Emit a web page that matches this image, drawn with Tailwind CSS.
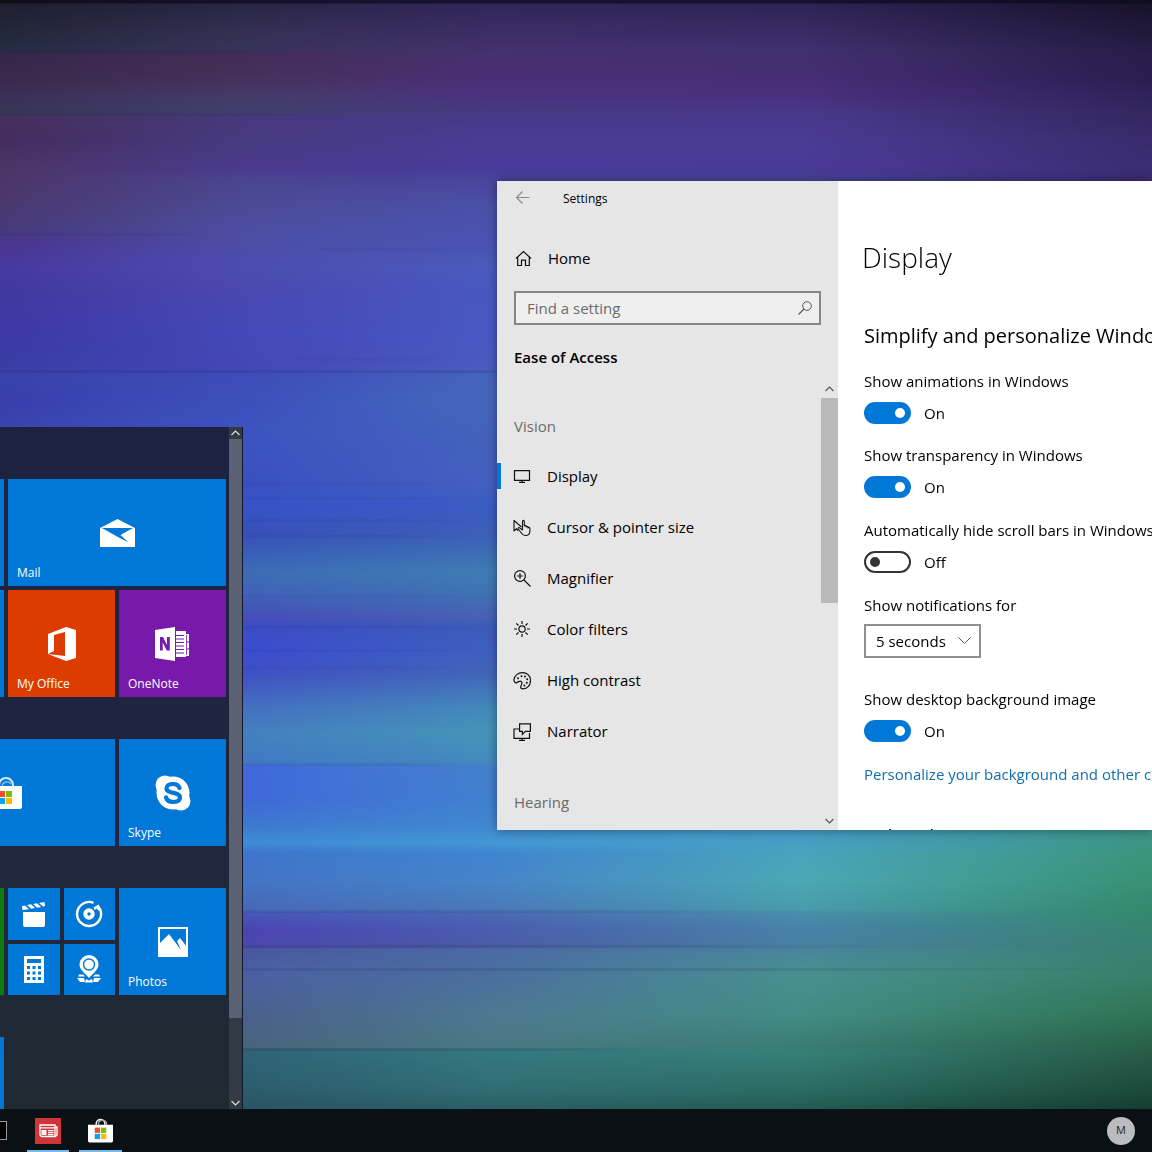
<!DOCTYPE html>
<html lang="en">
<head>
    <meta charset="UTF-8">
    <meta name="viewport" content="width=device-width, initial-scale=1.0">
    <title>Desktop</title>
    <script src="https://cdn.jsdelivr.net/npm/@tailwindcss/browser@4"></script>
</head>
<body class="font-['Open_Sans','Noto_Sans',sans-serif] text-[15px] text-black">
    <div class="relative flex h-screen flex-col overflow-hidden bg-[#3c48b4]">
        <canvas id="wallpaper" class="absolute inset-x-0 top-0 h-full w-full"></canvas>

        <main class="relative flex-1">
            <!-- Start menu -->
            <section aria-label="Start" class="absolute bottom-0 left-0 flex h-[682px] w-[243px] overflow-hidden border-r border-[#14182c] bg-linear-to-b from-[#1d2242] via-[#20263f] via-60% to-[#1f2a30]">
                <div class="flex flex-1 justify-end overflow-hidden pt-[52px] pr-[3px] text-[12px] text-white">
                    <div class="flex shrink-0 flex-col gap-[42px]">
                        <div class="grid grid-cols-[107px_107px_107px] auto-rows-[107px] gap-1">
                            <a href="#" aria-label="Calendar" class="bg-[#0078d7]"></a>
                            <a href="#" class="relative col-span-2 flex items-center justify-center bg-[#0078d7]">
                                <svg class="h-7 w-[35px]" viewBox="0 0 35 28"><path fill="#fff" d="M17.5 0 35 9v19H0V9z"/><path fill="#0078d7" d="M2 9h31L20.500 16l8 7.500L17 17.500z"/></svg>
                                <span class="absolute bottom-1 left-[9px]">Mail</span>
                            </a>
                            <a href="#" aria-label="Edge" class="bg-[#0078d7]"></a>
                            <a href="#" class="relative flex items-center justify-center bg-[#dc3c00]">
                                <svg class="h-[34px] w-[30px]" viewBox="0 0 30 34"><path fill="#fff" fill-rule="evenodd" d="M1 7 19 0l10 3v28l-10 3L1 27l17 2V5L7 8v16l-6 3z"/></svg>
                                <span class="absolute bottom-1 left-[9px]">My Office</span>
                            </a>
                            <a href="#" class="relative flex items-center justify-center bg-[#7719aa]">
                                <svg class="h-[34px] w-[35px]" viewBox="0 0 35 34"><path fill="#fff" d="M0 3 20 0v34L0 31zM21 4h10v3h3v22h-3v1H21z"/><path stroke="#7719aa" stroke-width="1.200" d="M21 8.500h8M21 12h8M21 15.500h8M21 19h8M21 22.500h8M21 26h8M31.500 15h3M31.500 22h3"/><path stroke="#7719aa" stroke-width=".8" d="M31.500 8v20"/><path fill="#7719aa" d="M5 10h3l4 8v-8h2.800v13.500h-3l-4.100-8v8H5z"/></svg>
                                <span class="absolute bottom-1 left-[9px]">OneNote</span>
                            </a>
                        </div>
                        <div class="grid grid-cols-[107px_107px_107px] auto-rows-[107px] gap-1">
                            <a href="#" aria-label="Store" class="col-span-2 flex items-center justify-center bg-[#0078d7]">
                                <svg class="h-[34px] w-8" viewBox="0 0 32 34"><path fill="none" stroke="#d6ebfb" stroke-width="2" d="M9 11V9a7 7 0 0 1 14 0v2"/><path fill="none" stroke="#7fbaeb" stroke-width="1.500" d="M12 10a5 5 0 0 1 9-2"/><path fill="#fff" d="M0 10h32v21a2 2 0 0 1-2 2H2a2 2 0 0 1-2-2z"/><path fill="#f25022" d="M9 15h6v6H9z"/><path fill="#7fba00" d="M16 15h6v6h-6z"/><path fill="#00a4ef" d="M9 22h6v6H9z"/><path fill="#ffb900" d="M16 22h6v6h-6z"/></svg>
                            </a>
                            <a href="#" class="relative flex items-center justify-center bg-[#0078d7]">
                                <svg class="size-9" viewBox="0 0 36 36"><g fill="#fff"><circle cx="18" cy="18" r="16.500"/><circle cx="10" cy="10" r="9.500"/><circle cx="26" cy="26" r="9.500"/></g><path fill="none" stroke="#0078d7" stroke-width="4.200" stroke-linecap="round" d="M24.500 13c-1-3-3.500-4-6.500-4-3.500 0-6.500 1.500-6.500 4.300 0 6.200 13.500 3 13.500 9.200 0 3-3.200 4.500-7 4.500-3.500 0-6-1.500-7-4.500"/></svg>
                                <span class="absolute bottom-1 left-[9px]">Skype</span>
                            </a>
                        </div>
                        <div class="grid grid-cols-[107px_107px_107px] auto-rows-[107px] gap-1">
                            <a href="#" aria-label="Xbox" class="bg-[#107c10]"></a>
                            <div class="grid grid-cols-2 grid-rows-2 gap-1">
                                <a href="#" aria-label="Movies" class="flex items-center justify-center bg-[#0078d7]">
                                    <svg class="h-[26px] w-6" viewBox="0 0 24 26" fill="#fff"><path d="M1 11h22v13a2 2 0 0 1-2 2H3a2 2 0 0 1-2-2zM0 5l3-.500 4 3.700L.500 9zM5 4l4-.700 4 3.700-4 .700zM11 3l4-.700 4 3.700-4 .700zM17 2l5.500-1 .500 4-2 .400z"/></svg>
                                </a>
                                <a href="#" aria-label="Music" class="flex items-center justify-center bg-[#0078d7]">
                                    <svg class="size-7" viewBox="0 0 28 28"><path fill="none" stroke="#fff" stroke-width="2.400" d="M18.500 2.800A12 12 0 1 0 25 9"/><path fill="#fff" d="m18.500 7.500 5-3 3 5-3.200 1.200-1.300-2.200-2.500 1.500z"/><circle cx="14" cy="14" r="3.700" fill="none" stroke="#fff" stroke-width="4"/></svg>
                                </a>
                                <a href="#" aria-label="Calculator" class="flex items-center justify-center bg-[#0078d7]">
                                    <svg class="h-[27px] w-5" viewBox="0 0 20 27"><path fill="#fff" d="M0 0h20v27H0z"/><path fill="#0078d7" d="M3 3h14v4H3zM3 10h3v3H3zM8.500 10h3v3h-3zM14 10h3v3h-3zM3 15.500h3v3H3zM8.500 15.500h3v3h-3zM14 15.500h3v3h-3zM3 21h3v3H3zM8.500 21h3v3h-3zM14 21h3v3h-3z"/></svg>
                                </a>
                                <a href="#" aria-label="Maps" class="flex items-center justify-center bg-[#0078d7]">
                                    <svg class="h-7 w-6" viewBox="0 0 24 28"><path fill="#fff" d="M12 0a9.500 9.500 0 0 1 9.500 9.500c0 5-4.500 8-9.500 13.500C7 17.500 2.500 14.500 2.500 9.500A9.500 9.500 0 0 1 12 0z"/><circle cx="12" cy="9.500" r="5.500" fill="none" stroke="#0078d7" stroke-width="1.400"/><path fill="#fff" d="M2 19.500h4l2 2H1zM22 19.500h-4l-2 2h7zM0 23h7l1 4H3zM24 23h-7l-1 4h5zM9 24l3 1.500 3-1.500 1 3.500H8z"/></svg>
                                </a>
                            </div>
                            <a href="#" class="relative flex items-center justify-center bg-[#0078d7]">
                                <svg class="size-[30px]" viewBox="0 0 30 30"><path fill="none" stroke="#fff" stroke-width="2" d="M1 1h28v28H1z"/><path fill="#fff" d="M1 17 11 7l12 16-4-9 3-3 7 9v9H1z"/></svg>
                                <span class="absolute bottom-1 left-[9px]">Photos</span>
                            </a>
                        </div>
                        <div class="grid grid-cols-[107px_107px_107px] auto-rows-[107px] gap-1">
                            <a href="#" aria-label="Weather" class="bg-[#0078d7]"></a>
                        </div>
                    </div>
                </div>
                <!-- scroll bar -->
                <div class="flex w-[13px] flex-col items-center bg-[#343a43]">
                    <svg class="h-3 w-[9px]" viewBox="0 0 9 12"><path fill="none" stroke="#ddd" stroke-width="1.200" d="m.500 8 4-4 4 4"/></svg>
                    <div class="h-[579px] w-full bg-[#5b6072]"></div>
                    <svg class="mt-auto h-3 w-[9px]" viewBox="0 0 9 12"><path fill="none" stroke="#ddd" stroke-width="1.200" d="m.500 4 4 4 4-4"/></svg>
                </div>
            </section>

            <!-- Settings window -->
            <section aria-label="Settings" class="absolute top-[181px] right-0 left-[497px] flex h-[649px] overflow-hidden bg-white shadow-[0_0_10px_rgba(0,0,0,0.4)]">
                <aside class="flex w-[341px] shrink-0 flex-col bg-[#e6e6e6]">
                    <div class="flex h-[35px] items-center px-[18px] text-[12px]">
                        <button aria-label="Back" class="mr-8">
                            <svg class="h-4 w-4" viewBox="0 0 16 16"><path fill="none" stroke="#8a8a8a" stroke-width="1.200" d="M14.500 6.500H2M7.500.500l-6 6 6 6"/></svg>
                        </button>
                        <h2>Settings</h2>
                    </div>
                    <a href="#" class="mt-6 flex h-9 items-center gap-4 px-[18px]">
                        <svg class="h-[17px] w-[17px]" viewBox="0 0 17 17"><path fill="none" stroke="#111" stroke-width="1.200" d="M1 8.500 8.500 1.500 16 8.500M2.700 7.500v8h3.800v-5.300h4v5.300h3.800v-8"/></svg>
                        Home
                    </a>
                    <div class="relative mx-[17px] mt-[15px]">
                        <input type="text" aria-label="Find a setting" placeholder="Find a setting" class="block h-[34px] w-full border-2 border-[#858585] bg-[#efefef] px-[11px] outline-none placeholder:text-[#6b6b6b]">
                        <svg class="absolute top-[10px] right-[9px] size-[14px]" viewBox="0 0 14 14"><circle cx="9" cy="5" r="4.300" fill="none" stroke="#555"/><path stroke="#555" stroke-width="1.100" d="m6 8-5.500 5.500"/></svg>
                    </div>
                    <h3 class="mx-[17px] mt-5 h-6 text-[15px] leading-6 font-semibold">Ease of Access</h3>
                    <div class="mt-3 flex flex-1 overflow-hidden">
                        <nav class="flex-1">
                            <h4 class="mt-[33px] px-[17px] leading-6 text-[#6b6b6b]">Vision</h4>
                            <div class="mt-[13px]">
                                <a href="#" class="relative flex h-[51px] items-center gap-4 px-[16px]">
                                    <span class="absolute top-3 left-0 h-[26px] w-1 bg-[#0078d7]"></span>
                                    <svg class="size-[18px]" viewBox="0 0 18 18"><path fill="none" stroke="#111" stroke-width="1.200" d="M1.500 2.600h15v9.800h-15zM9 12.500V14M6 14.400h6"/></svg>
                                    Display
                                </a>
                                <a href="#" class="flex h-[51px] items-center gap-4 px-[16px]">
                                    <svg class="size-[18px]" viewBox="0 0 18 18" fill="none" stroke="#111" stroke-width="1.100" stroke-linejoin="round"><path d="M8.500 8 1 1.500v10.500l2.500-2.400L5 12"/><path d="M9.500 9V2.300c0-1.300 1.800-1.300 1.800 0V7c0-1 1.800-1 1.800.300v.700c0-1 1.900-.900 1.900.300v.600c0-1 1.900-.900 1.900.300v2.800c0 3-1.800 4.500-4.400 4.500-2 0-3-.800-4-2.200L5.300 10c-.500-1 .600-1.800 1.500-1.100L9.500 11z"/></svg>
                                    Cursor &amp; pointer size
                                </a>
                                <a href="#" class="flex h-[51px] items-center gap-4 px-[16px]">
                                    <svg class="size-[18px]" viewBox="0 0 18 18" fill="none" stroke="#111" stroke-width="1.200"><circle cx="7" cy="6" r="5.400"/><path d="M4.200 6h5.600M7 3.200v5.600M11 10l6.500 6.500"/></svg>
                                    Magnifier
                                </a>
                                <a href="#" class="flex h-[51px] items-center gap-4 px-[16px]">
                                    <svg class="size-[18px]" viewBox="0 0 18 18" fill="none" stroke="#111" stroke-width="1.200"><circle cx="9" cy="8" r="3.200"/><path d="M9 0v3M9 13v3M1 8h3M14 8h3M3.300 2.300l2.200 2.200M12.500 11.500l2.200 2.200M14.700 2.300l-2.200 2.200M5.500 11.500l-2.200 2.200"/></svg>
                                    Color filters
                                </a>
                                <a href="#" class="flex h-[51px] items-center gap-4 px-[16px]">
                                    <svg class="size-[18px]" viewBox="0 0 18 18"><path fill="none" stroke="#111" stroke-width="1.200" d="M1 7.500C1.500 3.500 5 .700 9.500.700c4.800 0 8 3.200 8 7.800s-3 8.300-7.500 8.300c-1.600 0-2.800-.700-2.200-2.400l.900-2.300c.700-1.900-.700-3.700-2.500-2.700l-2.400 1.200C2.200 11.300.700 9.500 1 7.500z"/><g fill="#111"><circle cx="5" cy="6.200" r="1"/><circle cx="8.500" cy="4.200" r="1"/><circle cx="12" cy="4.400" r="1"/><circle cx="14.200" cy="7.200" r="1"/><circle cx="13.800" cy="10.800" r="1"/><circle cx="11.400" cy="13.500" r="1"/></g></svg>
                                    High contrast
                                </a>
                                <a href="#" class="flex h-[51px] items-center gap-4 px-[16px]">
                                    <svg class="size-[18px]" viewBox="0 0 18 18" fill="none" stroke="#111" stroke-width="1.200"><path d="M6.600.800h10.800v7.600h-5l-3 3v-3H6.600zM6.500 6H1v9.400h15.500V10M9 15.500v1.800M6 17.300h6"/></svg>
                                    Narrator
                                </a>
                            </div>
                            <h4 class="mt-[33px] px-[17px] leading-6 text-[#6b6b6b]">Hearing</h4>
                        </nav>
                        <div class="flex w-[17px] flex-col items-center pb-[3px]">
                            <svg class="h-[17px] w-[9px]" viewBox="0 0 9 17"><path fill="none" stroke="#555" stroke-width="1.100" d="m.500 10 4-4 4 4"/></svg>
                            <div class="h-[205px] w-full bg-[#b9b9b9]"></div>
                            <svg class="mt-auto h-3 w-[9px]" viewBox="0 0 9 12"><path fill="none" stroke="#555" stroke-width="1.100" d="m.500 4 4 4 4-4"/></svg>
                        </div>
                    </div>
                </aside>

                <div class="flex-1 overflow-hidden pt-[53px] pl-[26px] whitespace-nowrap">
                    <h1 class="-ml-0.5 text-[28px] leading-[46px] font-light">Display</h1>
                    <h2 class="mt-[42px] text-[20px] leading-7">Simplify and personalize Windows</h2>

                    <div class="mt-[19px]">
                        <label for="animations" class="block leading-6">Show animations in Windows</label>
                        <div class="mt-[9px] flex h-[22px] items-center gap-[13px]">
                            <input id="animations" type="checkbox" checked class="h-[22px] w-[47px] appearance-none rounded-full border-2 border-[#333] p-1 before:block before:size-[10px] before:rounded-full before:bg-[#333] checked:border-[#0078d7] checked:bg-[#0078d7] checked:before:ml-[25px] checked:before:bg-white">
                            <span>On</span>
                        </div>
                    </div>
                    <div class="mt-[19px]">
                        <label for="transparency" class="block leading-6">Show transparency in Windows</label>
                        <div class="mt-[9px] flex h-[22px] items-center gap-[13px]">
                            <input id="transparency" type="checkbox" checked class="h-[22px] w-[47px] appearance-none rounded-full border-2 border-[#333] p-1 before:block before:size-[10px] before:rounded-full before:bg-[#333] checked:border-[#0078d7] checked:bg-[#0078d7] checked:before:ml-[25px] checked:before:bg-white">
                            <span>On</span>
                        </div>
                    </div>
                    <div class="mt-5">
                        <label for="scrollbars" class="block leading-6">Automatically hide scroll bars in Windows</label>
                        <div class="mt-[9px] flex h-[22px] items-center gap-[13px]">
                            <input id="scrollbars" type="checkbox" class="h-[22px] w-[47px] appearance-none rounded-full border-2 border-[#333] p-1 before:block before:size-[10px] before:rounded-full before:bg-[#333] checked:border-[#0078d7] checked:bg-[#0078d7] checked:before:ml-[25px] checked:before:bg-white">
                            <span>Off</span>
                        </div>
                    </div>
                    <div class="mt-5">
                        <label for="notifications" class="block leading-6">Show notifications for</label>
                        <div class="relative mt-[7px] w-[117px]">
                            <select id="notifications" class="block h-[34px] w-full appearance-none border-2 border-[#8f8f8f] bg-white pl-[10px]">
                                <option>5 seconds</option>
                                <option>7 seconds</option>
                                <option>15 seconds</option>
                            </select>
                            <svg class="pointer-events-none absolute top-[13px] right-[10px] h-2 w-[13px]" viewBox="0 0 13 8"><path fill="none" stroke="#555" d="m.500.500 6 6 6-6"/></svg>
                        </div>
                    </div>
                    <div class="mt-[29px]">
                        <label for="background" class="block leading-6">Show desktop background image</label>
                        <div class="mt-[9px] flex h-[22px] items-center gap-[13px]">
                            <input id="background" type="checkbox" checked class="h-[22px] w-[47px] appearance-none rounded-full border-2 border-[#333] p-1 before:block before:size-[10px] before:rounded-full before:bg-[#333] checked:border-[#0078d7] checked:bg-[#0078d7] checked:before:ml-[25px] checked:before:bg-white">
                            <span>On</span>
                        </div>
                    </div>
                    <a href="#" class="mt-5 block leading-6 text-[#0f6fae]">Personalize your background and other customizations</a>
                    <h2 class="mt-[37px] text-[20px] leading-7">Related settings</h2>
                </div>
            </section>
        </main>

        <!-- Taskbar -->
        <footer class="relative flex h-[43px] items-stretch bg-[#0a1114]">
            <button aria-label="Command Prompt" class="flex w-[17px] items-center">
                <span class="h-[19px] w-[7px] border-y border-r border-[#9a9a9a] bg-black"></span>
            </button>
            <button aria-label="News" class="ml-[10px] flex w-[42px] items-center justify-center border-b-2 border-[#76b9ed] pt-[2px]">
                <svg class="size-[26px]" viewBox="0 0 26 26"><path fill="#d13438" d="M0 0h26v26H0z"/><path fill="none" stroke="#fff" stroke-width="1.300" d="M5 7h15v11.500H6.500L5 17zM20.500 9H22v8l-1.500 1.500M5 9.800h15"/><path fill="#fff" d="M6.500 12h5v5h-5zM13 12h5.500v1.300H13zM13 14h5.500v1.300H13zM13 16h5.500v1.300H13z"/></svg>
            </button>
            <button aria-label="Store" class="ml-[10px] flex w-[43px] items-center justify-center border-b-2 border-[#76b9ed] pt-[2px]">
                <svg class="size-[25px]" viewBox="0 0 26 26"><path fill="none" stroke="#fff" stroke-width="1.500" d="M8.500 7V6a4.500 4.500 0 0 1 9 0v1"/><path fill="none" stroke="#aaa" stroke-width="1.500" d="M11 7V5.500c0-4.500 8-4.500 8.500 1.500"/><path fill="#fff" d="M0 7h26v17a1.500 1.500 0 0 1-1.500 1.500h-23A1.500 1.500 0 0 1 0 24z"/><path fill="#f25022" d="M7 10h5.500v5.500H7z"/><path fill="#7fba00" d="M13.500 10H19v5.500h-5.500z"/><path fill="#00a4ef" d="M7 16.500h5.500V22H7z"/><path fill="#ffb900" d="M13.500 16.500H19V22h-5.500z"/></svg>
            </button>
            <button class="mr-[17px] ml-auto flex size-7 items-center justify-center self-center rounded-full bg-[#bcbcbe] text-[11px] text-[#222]">M</button>
        </footer>
    </div>

    <script>
        // Wallpaper colours: each row is [y, five colours spread over xs]
        const xs = [0, 250, 490, 800, 1152];
        const rows = [
            [0, '100e1a', '14102a', '181030', '181030', '100c1c'],
            [2, '100e1a', '14102a', '181030', '181030', '100c1c'],
            [4, '1e1e2e', '2a2646', '30265a', '2e2456', '17122a'],
            [30, '222638', '332f52', '3c2c66', '3a2a64', '20183a'],
            [50, '242c42', '38335a', '44306c', '40306e', '261c46'],
            [53, '35264a', '432c58', '46306e', '42306e', '281c48'],
            [75, '38284a', '45305a', '4a2e74', '452e74', '2a1c50'],
            [95, '3b2f56', '453a68', '4b3080', '49307e', '30225a'],
            [112, '353656', '3f406e', '453a80', '48388a', '34265e'],
            [116, '44305a', '46387c', '46398a', '48388c', '34265e'],
            [140, '442c5e', '463a80', '4a3b94', '4a3b94', '3a2a6c'],
            [170, '4b3566', '4a3a90', '4a3a9c', '4a3a98', '3c2c74'],
            [178, '4c3468', '4a4490', '48449c', '48449c', '3c2c74'],
            [205, '4a386e', '4b4a96', '4a50a8', '4a50a8', '3c2c74'],
            [230, '46397a', '4c4ea4', '4a52b0', '4a52b0', '3c2c74'],
            [240, '49348c', '4c4ea4', '4a52b2', '4a52b2', '3c2c74'],
            [265, '4838a0', '4c4cb0', '4a5abc', '4a5abc', '4a5abc'],
            [290, '4038a0', '4a48b0', '4858c0', '4858c0', '4858c0'],
            [330, '3c38a4', '4448b8', '4858c4', '4858c4', '4858c4'],
            [365, '3a3ca4', '4446b8', '4a5ac0', '4a5ac0', '4a5ac0'],
            [375, '3a42aa', '3e4cb8', '4464bc', '4464bc', '4464bc'],
            [400, '383eac', '3c50bc', '4468bc', '4468bc', '4468bc'],
            [430, '3a44b0', '3c54c0', '4462bc', '4462bc', '4462bc'],
            [482, '3a50c0', '3a50c0', '4460c0', '4460c0', '4460c0'],
            [504, '3652c8', '3652c8', '3a5cc4', '3a5cc4', '3a5cc4'],
            [534, '3850b8', '3850b8', '3c60b8', '3c60b8', '3c60b8'],
            [560, '3a64b8', '3a64b8', '3e74b4', '3e74b4', '3e74b4'],
            [573, '3e6cb4', '3e6cb4', '3e7cb4', '3e7cb4', '3e7cb4'],
            [595, '4060b8', '4060b8', '4070b4', '4070b4', '4070b4'],
            [616, '464eb8', '464eb8', '4862b4', '4862b4', '4862b4'],
            [625, '3c4cc4', '3c4cc4', '3c5cb8', '3c5cb8', '3c5cb8'],
            [651, '3c4cd0', '3c4cd0', '3c60c0', '3c60c0', '3c60c0'],
            [673, '4050c4', '4050c4', '4266b8', '4266b8', '4266b8'],
            [707, '4470c0', '4470c0', '4488bc', '4488bc', '4488bc'],
            [733, '4480c0', '4480c0', '4494b8', '4494b8', '4494b8'],
            [763, '4078c4', '4078c4', '4488c0', '4488c0', '4488c0'],
            [766, '4068dc', '4068dc', '4480cc', '4480cc', '4480cc'],
            [799, '4068d8', '4068d8', '4080d0', '4080d0', '4080d0'],
            [825, '3e78d0', '3e78d0', '4088d0', '4498c8', '3c9484'],
            [842, '3e8cd4', '3e8cd4', '4298d4', '469fc4', '3c9484'],
            [853, '3e74cc', '3e74cc', '4084d0', '48a4bc', '3c947c'],
            [881, '4274c4', '4274c4', '4684c8', '4aa8b4', '389074'],
            [909, '4868b8', '4868b8', '4a78b8', '489cac', '34886c'],
            [912, '4858b8', '4858b8', '4a6ab4', '4890ac', '34886c'],
            [929, '4a44b4', '4a44b4', '4a5cb0', '4880a8', '368470'],
            [946, '4a48a8', '4a48a8', '4a5ca4', '4880a0', '388070'],
            [950, '48589c', '48589c', '4a6aa4', '48869c', '388070'],
            [972, '4a60a4', '4a60a4', '4a6ea0', '489090', '38806a'],
            [1015, '4a608c', '4a608c', '4c7890', '428c84', '2e7454'],
            [1046, '48647c', '48647c', '4a7884', '3a7c74', '286048'],
            [1051, '2f6478', '2f6478', '347880', '368078', '285c48'],
            [1089, '2c5c6c', '2c5c6c', '326c74', '2c6c64', '1c4a3a'],
            [1110, '285462', '285462', '2a5c64', '205a50', '143c30'],
            [1152, '0a1114', '0a1114', '0a1114', '0a1114', '0a1114']
        ];
        // Thin darker streaks: [x, y, width, alpha]
        const streaks = [
            [0, 50, 330, 0.07], [0, 113, 400, 0.07], [0, 233, 240, 0.06],
            [320, 248, 177, 0.05], [0, 370, 800, 0.11], [300, 358, 197, 0.04],
            [243, 482, 254, 0.04], [243, 497, 254, 0.04], [243, 519, 254, 0.05],
            [243, 535, 254, 0.06], [243, 595, 254, 0.04], [243, 626, 254, 0.06],
            [243, 649, 254, 0.05], [243, 666, 254, 0.05], [243, 763, 254, 0.07],
            [243, 910, 600, 0.07], [243, 945, 700, 0.09], [243, 968, 909, 0.1],
            [243, 1048, 430, 0.14]
        ];

        const canvas = document.getElementById('wallpaper');
        canvas.width = 1152;
        canvas.height = 1152;
        const ctx = canvas.getContext('2d');
        const toRgb = hex => [0, 2, 4].map(i => parseInt(hex.slice(i, i + 2), 16));
        const mix = (a, b, t) => a.map((v, i) => v + (b[i] - v) * t);

        for (let i = 0; i < rows.length - 1; i++) {
            const [y0, ...top] = rows[i];
            const [y1, ...bottom] = rows[i + 1];
            for (let y = y0; y < y1; y++) {
                const line = ctx.createLinearGradient(0, 0, 1152, 0);
                xs.forEach((x, k) => {
                    const c = mix(toRgb(top[k]), toRgb(bottom[k]), (y - y0) / (y1 - y0));
                    line.addColorStop(x / 1152, `rgb(${c.map(Math.round).join(',')})`);
                });
                ctx.fillStyle = line;
                ctx.fillRect(0, y, 1152, 1);
            }
        }
        streaks.forEach(([x, y, w, alpha]) => {
            const fade = ctx.createLinearGradient(x, 0, x + w, 0);
            fade.addColorStop(0, `rgba(10,10,50,${alpha})`);
            fade.addColorStop(0.6, `rgba(10,10,50,${alpha})`);
            fade.addColorStop(1, 'rgba(10,10,50,0)');
            ctx.fillStyle = fade;
            ctx.fillRect(x, y, w, 3);
        });
    </script>
</body>
</html>
